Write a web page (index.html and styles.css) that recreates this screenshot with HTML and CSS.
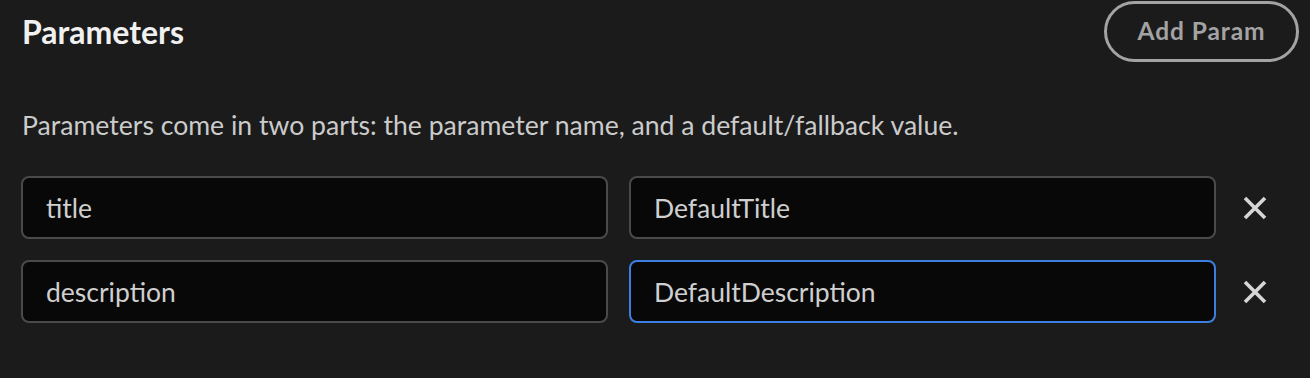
FILE: index.html
```html
<!DOCTYPE html>
<html>
<head>
<meta charset="utf-8">
<link rel="stylesheet" href="styles.css">
</head>
<body>
<div class="panel">
  <div class="header">
    <h2 class="title">Parameters</h2>
    <button class="add-btn">Add Param</button>
  </div>
  <p class="desc">Parameters come in two parts: the parameter name, and a default/fallback value.</p>
  <div class="rows">
    <div class="row">
      <div class="field">title</div>
      <div class="field">DefaultTitle</div>
      <button class="remove" aria-label="Remove"><svg width="24" height="24" viewBox="0 0 24 24"><path d="M2 2L22 22M22 2L2 22" stroke="#d6d6d6" stroke-width="3.6"/></svg></button>
    </div>
    <div class="row">
      <div class="field">description</div>
      <div class="field focus">DefaultDescription</div>
      <button class="remove" aria-label="Remove"><svg width="24" height="24" viewBox="0 0 24 24"><path d="M2 2L22 22M22 2L2 22" stroke="#d6d6d6" stroke-width="3.6"/></svg></button>
    </div>
  </div>
</div>
</body>
</html>
```
FILE: styles.css
```css
html, body {
  margin: 0;
  padding: 0;
  background: #1b1b1b;
  width: 1310px;
  height: 378px;
  overflow: hidden;
}
body {
  font-family: "Lato", "Open Sans", sans-serif;
  color: #cfcfcf;
}
.panel {
  padding: 1px 11px 0 21px;
  display: flex;
  flex-direction: column;
}
.header {
  display: flex;
  justify-content: space-between;
  align-items: center;
  height: 61px;
}
.title {
  margin: 0 0 0 1px;
  font-size: 32px;
  font-weight: 700;
  color: #f0f0f0;
}
.add-btn {
  width: 195px;
  height: 61px;
  border: 3px solid #a3a3a3;
  border-radius: 31px;
  background: transparent;
  color: #a3a3a3;
  font-family: inherit;
  font-size: 24.5px;
  font-weight: 700;
  letter-spacing: 0.9px;
  padding: 0 0 3px 0;
}
.desc {
  margin: 48px 0 0 1px;
  font-size: 26.6px;
  line-height: 30px;
  color: #cbcbcb;
}
.rows {
  margin-top: 36px;
  display: flex;
  flex-direction: column;
  gap: 21px;
}
.row {
  display: flex;
  align-items: center;
  gap: 21px;
}
.field {
  width: 587px;
  height: 63px;
  box-sizing: border-box;
  border: 2px solid #4a4a4a;
  border-radius: 8px;
  background: #080808;
  display: flex;
  align-items: center;
  padding-left: 23px;
  font-size: 26.5px;
  color: #cfcfcf;
}
.field.focus {
  border-color: #3d7fe0;
}
.remove {
  width: 40px;
  height: 40px;
  margin-left: -2px;
  border: 0;
  background: transparent;
  padding: 0;
  display: flex;
  align-items: center;
  justify-content: center;
}
```
